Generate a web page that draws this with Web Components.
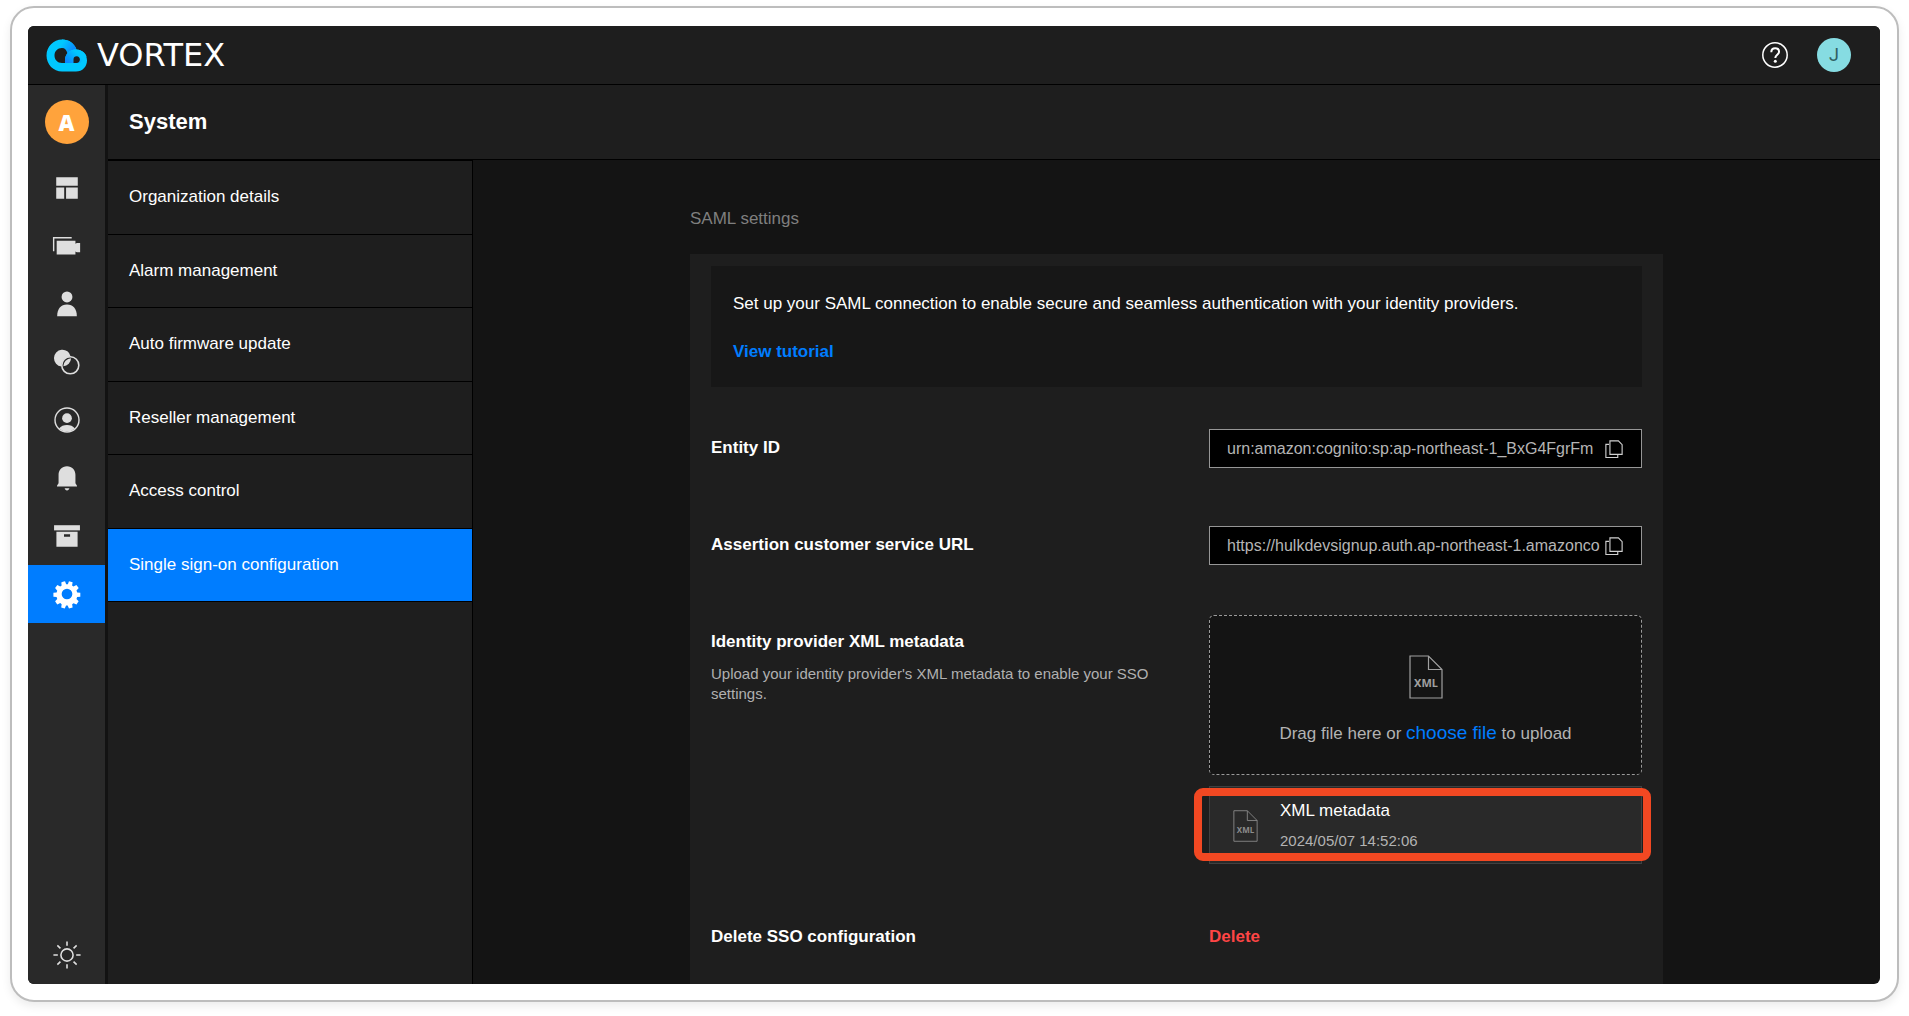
<!DOCTYPE html>
<html lang="en">
<head>
<meta charset="utf-8">
<title>VORTEX - Single sign-on configuration</title>
<style>
  body {
    margin: 0;
    background: #fff;
    color: #fff;
    font-family: "Liberation Sans", Arial, sans-serif;
    font-size: 17px;
    line-height: 20px;
  }
</style>
</head>
<body>
<app-window>
  <top-bar slot="top"></top-bar>
  <side-rail slot="rail"></side-rail>
  <page-header slot="header">System</page-header>
  <section-nav slot="nav">
    <section-link>Organization details</section-link>
    <section-link>Alarm management</section-link>
    <section-link>Auto firmware update</section-link>
    <section-link>Reseller management</section-link>
    <section-link>Access control</section-link>
    <section-link active>Single sign-on configuration</section-link>
  </section-nav>
  <settings-panel heading="SAML settings">
    <info-box link="View tutorial">Set up your SAML connection to enable secure and seamless authentication with your identity providers.</info-box>
    <setting-row label="Entity ID">
      <copy-field label="Entity ID" value="urn:amazon:cognito:sp:ap-northeast-1_BxG4FgrFm"></copy-field>
    </setting-row>
    <setting-row label="Assertion customer service URL">
      <copy-field label="Assertion customer service URL" value="https://hulkdevsignup.auth.ap-northeast-1.amazonco"></copy-field>
    </setting-row>
    <setting-row label="Identity provider XML metadata" hint="Upload your identity provider's XML metadata to enable your SSO settings." tall>
      <file-drop></file-drop>
      <file-item name="XML metadata" date="2024/05/07 14:52:06"></file-item>
    </setting-row>
    <setting-row label="Delete SSO configuration">
      <danger-button>Delete</danger-button>
    </setting-row>
  </settings-panel>
</app-window>

<script>
const ICONS = {
  dashboard: '<path d="M4.500 4.500h23v9h-23zM4.500 15.500h8.500v12h-8.500zM15 15.500h12.500v12h-12.500z"/>',
  cameras: '<path d="M1 6.500h20v1.500h-18.500v13.500h-1.500z"/><path d="M5 10.500h20v3l1.500-.8h3.500v10h-3.500l-1.500-.8v3.100h-20z"/>',
  person: '<circle cx="16" cy="8.500" r="5.800"/><path d="M5.500 29c0-8 4-12.500 10.500-12.500s10.500 4.500 10.500 12.500z"/>',
  circles: '<path d="M19.900 10A9 9 0 1 0 10 20.800a10.200 10.200 0 0 1 9.900-10.800z"/><path d="M20.300 12a8.600 8.600 0 0 1-8.200 8.400a8.600 8.600 0 0 1 8.200-8.400z"/><circle cx="19.500" cy="19.500" r="9.100" fill="none" stroke="currentColor" stroke-width="1.700"/>',
  account: '<circle cx="16" cy="16" r="12.800" fill="none" stroke="currentColor" stroke-width="1.500"/><circle cx="16" cy="14" r="5.200"/><path d="M7.500 25c2-2.600 5-3.700 8.500-3.700s6.500 1.100 8.500 3.700a12.500 12.500 0 0 1-17 0z"/>',
  bell: '<path d="M16 3.500c-5.500 0-9 4-9 9v8.500c0 1.500-1.700 2-1.700 4h21.400c0-2-1.700-2.500-1.700-4v-8.500c0-5-3.500-9-9-9z"/><path d="M13.500 27h5c-.3 1.500-1.200 2.200-2.500 2.200s-2.200-.7-2.500-2.200z"/>',
  archive: '<path d="M2.200 4.500h27.600v5.500h-27.600z"/><path fill-rule="evenodd" d="M4.700 11.500h22.600v16h-22.600zM12.800 14v2.700h6.500v-2.700z"/>',
  gear: '<path fill-rule="evenodd" d="M11.600 2.900l2.300-.5 1.200 3.200h1.800l1.200-3.200 3.900 1-.6 3.500 1.500 1.100 3.100-1.700 2.500 3.300-2.400 2.700.8 2 3.300.3v4.400l-3.400.3-.7 2 2.300 2.500-2.300 3.300-3.200-1.300-1.400 1.100.5 3.400-3.900 1.200-1.400-3.200h-1.700l-1.400 3.200-3.800-1.200.5-3.500-1.500-1.100-3.200 1.400-2.300-3.400 2.300-2.500-.7-1.900-3.400-.3v-4.400l3.400-.3.700-1.900-2.300-2.700 2.400-3.300 3.100 1.600 1.500-1.100-.4-3.300zM16 10.300a5.700 5.700 0 1 0 0 11.400a5.700 5.700 0 1 0 0-11.400z"/>',
  sun: '<g fill="none" stroke="currentColor" stroke-width="1.700"><circle cx="16" cy="16" r="6.500"/><path d="M16 1.500v4.700M16 25.800v4.700M1.500 16h4.700M25.800 16h4.700M5.700 5.700l3.300 3.300M23 23l3.300 3.300M5.700 26.300l3.300-3.300M23 9l3.300-3.300"/></g>',
  help: '<circle cx="16" cy="16" r="12.200" fill="none" stroke="currentColor" stroke-width="1.500"/><path d="M12.300 13.200c0-2.700 1.500-4 3.900-4s3.900 1.400 3.900 3.500c0 2.900-3.800 3.200-3.800 6.200" fill="none" stroke="currentColor" stroke-width="2"/><circle cx="16.300" cy="22.300" r="1.500"/>',
  copy: '<g fill="none" stroke="currentColor" stroke-width="1.800"><path d="M9.500 3h13.500l6 6v15.500h-19.500z"/><path d="M8 8.500h-5v21h19v-4"/></g>'
};

// Creates a shadow root from markup, every element below goes through it
class BaseElement extends HTMLElement {
  constructor() {
    super();
    this.attachShadow({ mode: 'open' });
  }

  connectedCallback() {
    this.shadowRoot.innerHTML = `<style>*{box-sizing:border-box}</style>${this.render()}`;
  }

  attr(name) {
    return this.getAttribute(name) || '';
  }
}

class AppIcon extends BaseElement {
  render() {
    return `
      <style>
        :host { display: block; width: 32px; height: 32px; }
        svg { display: block; width: 100%; height: 100%; fill: currentColor; }
      </style>
      <svg viewBox="0 0 32 32" aria-hidden="true">${ICONS[this.attr('name')]}</svg>`;
  }
}

// File sheet with a folded corner and its type written on it
class XmlIcon extends BaseElement {
  render() {
    return `
      <style>
        :host { display: block; width: 34px; height: 44px; color: #a0a0a0; }
        svg { display: block; width: 100%; height: 100%; }
        text { font: bold 11px "Noto Sans", sans-serif; fill: currentColor; }
      </style>
      <svg viewBox="0 0 34 44" aria-hidden="true">
        <path d="M1 1h18.500l13.500 13.500v28.500h-32zM19.500 1v13.500h13.500" fill="none" stroke="currentColor" stroke-width="1.200"/>
        <text x="17" y="32" text-anchor="middle">XML</text>
      </svg>`;
  }
}

class AppWindow extends BaseElement {
  render() {
    return `
      <style>
        :host { display: flex; height: 100vh; box-sizing: border-box; padding: 6px 10px 14px; }
        .frame {
          flex: 1;
          min-width: 0;
          display: flex;
          padding: 18px 17px 16px 16px;
          border: 2px solid #bdbdbd;
          border-radius: 24px;
          background: #fff;
          box-shadow: 0 4px 10px rgba(0, 0, 0, .08);
        }
        .app {
          flex: 1;
          min-width: 0;
          display: grid;
          grid-template: auto auto minmax(0, 1fr) / auto auto minmax(0, 1fr);
          grid-template-areas: "top top top" "rail header header" "rail nav main";
          border-radius: 6px;
          overflow: hidden;
          background: #141414;
        }
        slot { display: block; min-height: 0; }
        slot[name=top] { grid-area: top; }
        slot[name=rail] { grid-area: rail; display: grid; }
        slot[name=header] { grid-area: header; }
        slot[name=nav] { grid-area: nav; display: grid; }
        main { grid-area: main; overflow: auto; scrollbar-width: none; }
      </style>
      <div class="frame">
        <div class="app">
          <slot name="top"></slot>
          <slot name="rail"></slot>
          <slot name="header"></slot>
          <slot name="nav"></slot>
          <main><slot></slot></main>
        </div>
      </div>`;
  }
}

class TopBar extends BaseElement {
  render() {
    return `
      <style>
        :host { display: block; background: #1e1e1e; border-bottom: 1px solid #000; }
        header { display: flex; align-items: center; height: 58px; padding: 0 29px 0 18px; }
        .brand { display: flex; align-items: center; gap: 9px; margin-right: auto; color: #fff; text-decoration: none; font: 32px/32px "DejaVu Sans", sans-serif; }
        .brand svg { display: block; width: 42px; height: 33px; }
        button { display: grid; place-items: center; padding: 0; border: 0; background: none; color: #fff; }
        .user { width: 34px; height: 34px; margin-left: 26px; border-radius: 50%; background: #86dce2; color: #2f5f63; font: 18px/34px Roboto, sans-serif; }
      </style>
      <header>
        <a class="brand" href="#">
          <svg viewBox="0 0 42 33" aria-hidden="true">
            <defs>
              <linearGradient id="arc" x1="0" y1="0" x2="1" y2=".6"><stop offset=".2" stop-color="#00c8ff"/><stop offset=".9" stop-color="#0a8bff"/></linearGradient>
              <linearGradient id="puff" x1="0" y1=".8" x2=".8" y2=".3"><stop offset="0" stop-color="#0a84ff"/><stop offset=".8" stop-color="#00c8ff"/></linearGradient>
            </defs>
            <path d="M16 .5c7 0 12.500 4 14.500 10c6 .3 10.500 4.800 10.500 11s-4.500 11-11 11h-14c-8.500 0-15.500-7-15.500-16s7-16 15.500-16z" fill="#00c8ff"/>
            <path d="M16 .5c7 0 12.500 4 14.500 10c-5 0-7.500 2-9 4c-1-2.500-3-5.500-7-5.500z" fill="url(#arc)"/>
            <path d="M16 9c-4.500 0-7.500 3.200-7.500 7.500s3 7.500 7.500 7.500h3c0-4.500 0-7 2.500-9.500c-1-3.500-2.500-5.500-5.500-5.500z" fill="#1e1e1e"/>
            <path d="M19 24v-3c0-6 4.500-10.500 11-10.500c5 0 9 3 10.500 7l-6.500 6.500z" fill="url(#puff)"/>
            <path d="M27.500 24v-3.500c0-2 1.300-3.200 3.200-3.200s3.200 1.400 3.200 3.300s-1.400 3.400-3.400 3.400z" fill="#1e1e1e"/>
          </svg>
          <span>VORTEX</span>
        </a>
        <button type="button" aria-label="Help"><app-icon name="help"></app-icon></button>
        <button type="button" class="user">J</button>
      </header>`;
  }
}

class SideRail extends BaseElement {
  render() {
    const names = ['dashboard', 'cameras', 'person', 'circles', 'account', 'bell', 'archive', 'gear'];
    return `
      <style>
        :host { display: block; background: #292929; border-right: 3px solid #121212; }
        nav { display: flex; flex-direction: column; align-items: stretch; width: 77px; height: 100%; }
        .org { display: grid; place-items: center; height: 74px; padding: 0; border: 0; background: none; color: #fff; font: 800 22px/44px "Open Sans", sans-serif; }
        .org span { width: 44px; height: 44px; border-radius: 50%; background: #ffa33c; }
        a, .theme { display: grid; place-items: center; height: 58px; color: #dedede; }
        a app-icon, .theme app-icon { width: 30px; height: 30px; }
        a.active { background: #007dff; color: #fff; }
        .theme { margin-top: auto; padding: 0; border: 0; background: none; }
      </style>
      <nav aria-label="Main">
        <button type="button" class="org"><span>A</span></button>
        ${names.map(n => `<a href="#" aria-label="${n}" class="${n === 'gear' ? 'active' : ''}"><app-icon name="${n}"></app-icon></a>`).join('')}
        <button type="button" class="theme" aria-label="Theme"><app-icon name="sun"></app-icon></button>
      </nav>`;
  }
}

class PageHeader extends BaseElement {
  render() {
    return `
      <style>
        :host { display: block; background: #1e1e1e; border-bottom: 1px solid #000; }
        h1 { margin: 0; padding: 0 21px; font-size: 22px; line-height: 74px; }
      </style>
      <h1><slot></slot></h1>`;
  }
}

class SectionNav extends BaseElement {
  render() {
    return `
      <style>
        :host { display: block; width: 365px; box-sizing: border-box; background: #1e1e1e; border-top: 1px solid #000; border-right: 1px solid #000; }
        nav { display: grid; grid-auto-rows: 1fr; height: 441px; }
      </style>
      <nav aria-label="System"><slot></slot></nav>`;
  }
}

class SectionLink extends BaseElement {
  render() {
    return `
      <style>
        :host { display: grid; border-bottom: 1px solid #000; }
        :host([active]) { background: #007dff; }
        a { display: flex; align-items: center; padding: 0 21px; color: inherit; text-decoration: none; }
      </style>
      <a href="#"><slot></slot></a>`;
  }
}

class SettingsPanel extends BaseElement {
  render() {
    return `
      <style>
        :host { display: block; max-width: 973px; margin: 0 auto; padding-top: 49px; }
        h2 { margin: 0 0 25px; color: #7f7f7f; font-size: 17px; font-weight: 400; }
        .card { padding: 12px 21px 48px; background: #1e1e1e; }
      </style>
      <h2>${this.attr('heading')}</h2>
      <div class="card"><slot></slot></div>`;
  }
}

class InfoBox extends BaseElement {
  render() {
    return `
      <style>
        :host { display: block; margin-bottom: 42px; padding: 28px 22px 25px; background: #171717; }
        p { margin: 0 0 28px; }
        a { color: #007dff; font-weight: 700; text-decoration: none; }
      </style>
      <p><slot></slot></p>
      <a href="#">${this.attr('link')}</a>`;
  }
}

class SettingRow extends BaseElement {
  render() {
    const hint = this.attr('hint');
    return `
      <style>
        :host { display: grid; grid-template-columns: 1fr 433px; column-gap: 56px; margin-bottom: 58px; }
        :host([tall]) { margin: -8px 0 54px; }
        .text { padding-top: 9px; }
        :host([tall]) .text { padding-top: 17px; }
        h3 { margin: 0; font-size: 17px; }
        p { margin: 12px 0 0; color: #b0b0b0; font-size: 15px; }
        .control { min-width: 0; }
      </style>
      <div class="text"><h3>${this.attr('label')}</h3>${hint && `<p>${hint}</p>`}</div>
      <div class="control"><slot></slot></div>`;
  }
}

class CopyField extends BaseElement {
  render() {
    return `
      <style>
        :host { display: flex; align-items: center; height: 39px; box-sizing: border-box; padding: 0 17px; border: 1px solid #969696; background: #000; color: #b5b5b5; }
        input { flex: 1; min-width: 0; padding: 0; border: 0; outline: 0; background: none; color: inherit; font: 16px/20px "Liberation Sans", Arial, sans-serif; }
        button { margin-left: 4px; padding: 0; border: 0; background: none; color: #d0d0d0; }
        app-icon { width: 20px; height: 20px; }
      </style>
      <input type="text" readonly aria-label="${this.attr('label')}" value="${this.attr('value')}">
      <button type="button" aria-label="Copy"><app-icon name="copy"></app-icon></button>`;
  }

  connectedCallback() {
    super.connectedCallback();
    const input = this.shadowRoot.querySelector('input');
    this.shadowRoot.querySelector('button').addEventListener('click', () => {
      input.select();
      document.execCommand('copy');
    });
  }
}

class FileDrop extends BaseElement {
  render() {
    return `
      <style>
        :host { display: flex; flex-direction: column; align-items: center; height: 160px; box-sizing: border-box; padding-top: 39px; border: 1px dashed #9a9a9a; border-radius: 5px; background: #141414; color: #b3b3b3; }
        p { margin: 24px 0 0; }
        label { color: #007dff; font-size: 19px; cursor: pointer; }
        input { display: none; }
      </style>
      <xml-icon></xml-icon>
      <p>Drag file here or <label for="file">choose file</label> to upload</p>
      <input type="file" id="file" accept=".xml">`;
  }
}

class FileItem extends BaseElement {
  render() {
    return `
      <style>
        :host { position: relative; display: flex; align-items: center; gap: 22px; height: 78px; box-sizing: border-box; margin-top: 11px; padding: 2px 23px 0; border: 1px solid #404040; background: #292929; }
        xml-icon { width: 25px; height: 32px; color: #8c8c8c; }
        .name { margin-bottom: 10px; }
        .date { color: #b3b3b3; font-size: 15px; }
        /* highlight ring over the item */
        .ring { position: absolute; inset: 1px -10px 2px -16px; border: 8px solid #f24822; border-radius: 9px; pointer-events: none; }
      </style>
      <xml-icon></xml-icon>
      <div>
        <div class="name">${this.attr('name')}</div>
        <div class="date">${this.attr('date')}</div>
      </div>
      <div class="ring"></div>`;
  }
}

class DangerButton extends BaseElement {
  render() {
    return `
      <style>
        :host { display: block; padding-top: 9px; }
        button { display: block; padding: 0; border: 0; background: none; color: #ff4545; font: bold 17px/20px "Liberation Sans", Arial, sans-serif; }
      </style>
      <button type="button"><slot></slot></button>`;
  }
}

customElements.define('app-icon', AppIcon);
customElements.define('xml-icon', XmlIcon);
customElements.define('app-window', AppWindow);
customElements.define('top-bar', TopBar);
customElements.define('side-rail', SideRail);
customElements.define('page-header', PageHeader);
customElements.define('section-nav', SectionNav);
customElements.define('section-link', SectionLink);
customElements.define('settings-panel', SettingsPanel);
customElements.define('info-box', InfoBox);
customElements.define('setting-row', SettingRow);
customElements.define('copy-field', CopyField);
customElements.define('file-drop', FileDrop);
customElements.define('file-item', FileItem);
customElements.define('danger-button', DangerButton);
</script>
</body>
</html>
